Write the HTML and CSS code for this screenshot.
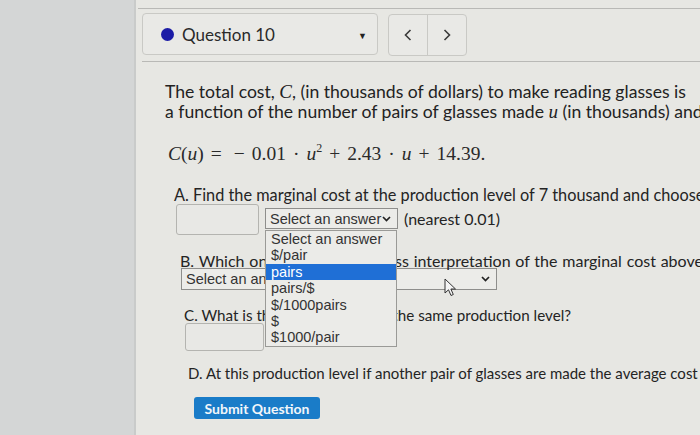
FILE: index.html
```html
<!DOCTYPE html>
<html>
<head>
<meta charset="utf-8">
<link rel="stylesheet" href="styles.css">
</head>
<body>
<div class="sidebar"></div>
<div class="main">
  <div class="topline"></div>
  <div class="header">
    <div class="qbox">
      <span class="dot"></span>
      <span class="qtitle">Question 10</span>
      <span class="caret">&#9660;</span>
    </div>
    <div class="nav">
      <span class="navbtn"><svg width="8" height="12" viewBox="0 0 8 12"><path d="M6.5 1 L1.5 6 L6.5 11" fill="none" stroke="#3a3a3a" stroke-width="1.6"/></svg></span>
      <span class="navbtn"><svg width="8" height="12" viewBox="0 0 8 12"><path d="M1.5 1 L6.5 6 L1.5 11" fill="none" stroke="#3a3a3a" stroke-width="1.6"/></svg></span>
    </div>
  </div>
  <div class="rule"></div>
  <div class="content">
    <p class="para">The total cost, <i class="mv">C</i>, (in thousands of dollars) to make reading glasses is<br>a function of the number of pairs of glasses made <i class="mv">u</i> (in thousands) and is given by</p>
    <p class="formula"><i>C</i>(<i>u</i>)<span class="op">=</span><span class="neg">−</span>0.01<span class="op">·</span><i>u</i><sup>2</sup><span class="op">+</span>2.43<span class="op">·</span><i>u</i><span class="op">+</span>14.39.</p>
    <p class="qa">A. Find the marginal cost at the production level of 7 thousand and choose the correct units.</p>
    <div class="row-a">
      <div class="inbox inbox-a"></div>
      <div class="selwrap">
        <div class="sel sel-a"><span>Select an answer</span><svg class="chev" width="9" height="6" viewBox="0 0 9 6"><path d="M1 1 L4.5 4.5 L8 1" fill="none" stroke="#222" stroke-width="1.7"/></svg></div>
        <ul class="droplist">
          <li>Select an answer</li>
          <li>$/pair</li>
          <li class="hl">pairs</li>
          <li>pairs/$</li>
          <li>$/1000pairs</li>
          <li>$</li>
          <li>$1000/pair</li>
        </ul>
      </div>
      <span class="nearest">(nearest 0.01)</span>
    </div>
    <p class="qb">B. Which one is a good business interpretation of the marginal cost above?</p>
    <div class="sel sel-b"><span>Select an answer</span><svg class="chev" width="9" height="6" viewBox="0 0 9 6"><path d="M1 1 L4.5 4.5 L8 1" fill="none" stroke="#222" stroke-width="1.7"/></svg></div>
    <p class="qc">C. What is the average cost for the same production level?</p>
    <div class="inbox inbox-c"></div>
    <p class="qd">D. At this production level if another pair of glasses are made the average cost will</p>
    <button class="submit">Submit Question</button>
  </div>
  <svg class="cursor" width="14" height="20" viewBox="0 0 14 20"><path d="M1 1 L1 15 L4.5 11.8 L7 17.5 L9.3 16.5 L6.9 11 L11.5 11 Z" fill="#f4f4f4" stroke="#333" stroke-width="1" stroke-linejoin="round"/></svg>
</div>
</body>
</html>
```
FILE: styles.css
```css
html, body {
  margin: 0;
  padding: 0;
}
body {
  width: 700px;
  height: 435px;
  overflow: hidden;
  display: flex;
  background: #e6e6e2;
  font-family: Lato, "Open Sans", sans-serif;
  color: #242424;
}
.sidebar {
  width: 134px;
  flex: none;
  background: #d4d6d6;
  border-right: 2px solid #c9cbca;
}
.main {
  position: relative;
  flex: 1;
  overflow: hidden;
  white-space: nowrap;
  padding-top: 8px;
  background: #e7e7e3;
}
.topline {
  border-top: 1px solid #b9b9b6;
  margin-left: 2px;
}
.header {
  display: flex;
  gap: 10px;
  margin-top: 4px;
  padding-left: 6px;
}
.qbox {
  width: 236px;
  height: 42px;
  box-sizing: border-box;
  border: 1px solid #c9c9c5;
  border-radius: 4px;
  display: flex;
  align-items: center;
  padding: 0 10px 0 18px;
  background: #e9e9e6;
}
.dot {
  width: 13px;
  height: 13px;
  border-radius: 50%;
  background: #1c1ca6;
  margin-right: 8px;
}
.qtitle {
  font-size: 17px;
  color: #2a2a2a;
  flex: 1;
}
.caret {
  font-size: 9px;
  color: #222;
  margin-top: 3px;
}
.nav {
  display: flex;
  width: 79px;
  height: 42px;
  margin-top: 1px;
  box-sizing: border-box;
  border: 1px solid #c9c9c5;
  border-radius: 4px;
  background: #e9e9e6;
}
.navbtn {
  flex: 1;
  display: flex;
  align-items: center;
  justify-content: center;
}
.navbtn + .navbtn {
  border-left: 1px solid #c9c9c5;
}
.rule {
  margin-top: 5px;
  margin-left: 6px;
  border-top: 1px solid #b9b9b6;
}
.content {
  padding-left: 29px;
}
.content p {
  margin: 0;
}
.para {
  margin-top: 20px !important;
  font-size: 17.6px;
  line-height: 20px;
  color: #222;
}
.mv {
  font-family: "Liberation Serif", "DejaVu Serif", serif;
  font-size: 19px;
}
.formula {
  margin-top: 20px !important;
  margin-left: 3px !important;
  font-family: "Liberation Serif", "DejaVu Serif", serif;
  font-size: 19.5px;
  line-height: 24px;
  color: #2a2a2a;
}
.formula i {
  font-style: italic;
}
.formula sup {
  font-size: 12px;
  line-height: 0;
  vertical-align: 8px;
}
.op {
  margin: 0 7px;
}
.neg {
  margin: 0 7px 0 5px;
}
.qa {
  margin-top: 20px !important;
  margin-left: 9px !important;
  font-size: 16.3px;
  line-height: 18px;
}
.row-a {
  display: flex;
  align-items: flex-start;
  margin-left: 11px;
}
.inbox {
  box-sizing: border-box;
  border: 1px solid #b4b4b0;
  border-radius: 3px;
  background: #e8e8e5;
}
.inbox-a {
  width: 83px;
  height: 31px;
}
.selwrap {
  position: relative;
  margin-left: 6px;
  margin-top: 4px;
}
.sel {
  box-sizing: border-box;
  height: 21px;
  border: 1px solid #8e8e8c;
  background: #ecece9;
  display: flex;
  align-items: center;
  justify-content: space-between;
  padding: 0 6px 0 4px;
  font-family: "Liberation Sans", Arial, sans-serif;
  font-size: 14.5px;
  color: #333;
}
.sel-a {
  width: 133px;
}
.droplist {
  position: absolute;
  left: 0;
  top: 22px;
  width: 132px;
  margin: 0;
  padding: 0;
  list-style: none;
  box-sizing: border-box;
  border: 1px solid #9a9a97;
  background: #ebebe8;
  font-family: "Liberation Sans", Arial, sans-serif;
  font-size: 14.5px;
  color: #333;
  z-index: 2;
}
.droplist li {
  height: 16.4px;
  line-height: 16.4px;
  padding-left: 5px;
}
.droplist li.hl {
  background: #1f6fd6;
  color: #fff;
}
.nearest {
  margin-left: 6px;
  margin-top: 5px;
  font-size: 16px;
}
.qb {
  margin-top: 17px !important;
  margin-left: 15px !important;
  font-size: 16px;
  line-height: 18px;
  word-spacing: 0.7px;
}
.sel-b {
  margin-left: 16px;
  margin-top: -2px;
  width: 316px;
  height: 22px;
}
.qc {
  margin-top: 16px !important;
  margin-left: 19px !important;
  font-size: 15.2px;
  line-height: 18px;
}
.inbox-c {
  margin-left: 20px;
  margin-top: -1px;
  width: 79px;
  height: 28px;
}
.qd {
  margin-top: 13px !important;
  margin-left: 23px !important;
  font-size: 15px;
  line-height: 18px;
}
.submit {
  display: block;
  margin-top: 15px;
  margin-left: 29px;
  width: 126px;
  height: 22px;
  border: none;
  border-radius: 3px;
  background: #1a7cc8;
  color: #f2f6fa;
  font-family: Lato, "Open Sans", sans-serif;
  font-weight: bold;
  font-size: 14px;
  padding: 0;
}
.cursor {
  position: absolute;
  left: 308px;
  top: 278px;
}
```
